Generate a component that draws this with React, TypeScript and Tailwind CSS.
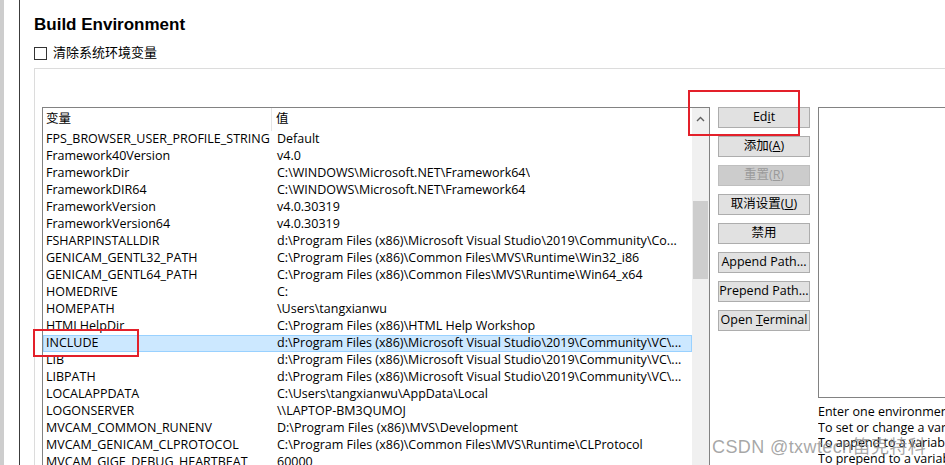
import React from 'react';

const rows: [string, string][] = [
  ['FPS_BROWSER_USER_PROFILE_STRING', 'Default'],
  ['Framework40Version', 'v4.0'],
  ['FrameworkDir', 'C:\\WINDOWS\\Microsoft.NET\\Framework64\\'],
  ['FrameworkDIR64', 'C:\\WINDOWS\\Microsoft.NET\\Framework64'],
  ['FrameworkVersion', 'v4.0.30319'],
  ['FrameworkVersion64', 'v4.0.30319'],
  ['FSHARPINSTALLDIR', 'd:\\Program Files (x86)\\Microsoft Visual Studio\\2019\\Community\\Co...'],
  ['GENICAM_GENTL32_PATH', 'C:\\Program Files (x86)\\Common Files\\MVS\\Runtime\\Win32_i86'],
  ['GENICAM_GENTL64_PATH', 'C:\\Program Files (x86)\\Common Files\\MVS\\Runtime\\Win64_x64'],
  ['HOMEDRIVE', 'C:'],
  ['HOMEPATH', '\\Users\\tangxianwu'],
  ['HTMLHelpDir', 'C:\\Program Files (x86)\\HTML Help Workshop'],
  ['INCLUDE', 'd:\\Program Files (x86)\\Microsoft Visual Studio\\2019\\Community\\VC\\...'],
  ['LIB', 'd:\\Program Files (x86)\\Microsoft Visual Studio\\2019\\Community\\VC\\...'],
  ['LIBPATH', 'd:\\Program Files (x86)\\Microsoft Visual Studio\\2019\\Community\\VC\\...'],
  ['LOCALAPPDATA', 'C:\\Users\\tangxianwu\\AppData\\Local'],
  ['LOGONSERVER', '\\\\LAPTOP-BM3QUMOJ'],
  ['MVCAM_COMMON_RUNENV', 'D:\\Program Files (x86)\\MVS\\Development'],
  ['MVCAM_GENICAM_CLPROTOCOL', 'C:\\Program Files (x86)\\Common Files\\MVS\\Runtime\\CLProtocol'],
  ['MVCAM_GIGE_DEBUG_HEARTBEAT', '60000'],
];

const ui = { fontFamily: '"Open Sans", "Noto Sans CJK SC", sans-serif' };

const Btn = ({ children, disabled }: { children: React.ReactNode; disabled?: boolean }) => (
  <div
    className={`h-[21px] w-[92px] border flex items-center justify-center text-[12.5px] whitespace-nowrap ${
      disabled
        ? 'bg-[#cccccc] border-[#bfbfbf] text-[#9a9a9a]'
        : 'bg-[#e1e1e1] border-[#adadad] text-black'
    }`}
    style={ui}
  >
    <span>{children}</span>
  </div>
);

export default function App() {
  return (
    <div
      className="relative w-[945px] h-[465px] overflow-hidden bg-white flex text-black"
      style={{ fontFamily: '"Liberation Sans", "Noto Sans CJK SC", sans-serif' }}
    >
      {/* left window edge */}
      <div className="w-[19px] h-full flex shrink-0">
        <div className="w-[4px] h-full bg-[#cdcdcd]" />
      </div>
      <div className="w-[1px] h-full bg-[#3c3c3c] shrink-0" />

      <div className="flex-1 pl-[14px] flex flex-col min-w-0">
        <h1 className="mt-[13px] h-[24px] leading-[24px] text-[17px] font-bold">Build Environment</h1>
        <label className="mt-[8px] h-[16px] flex items-center gap-[6px] text-[13px]">
          <span className="w-[13px] h-[13px] border border-[#333333] bg-white" />
          <span>清除系统环境变量</span>
        </label>

        {/* group box */}
        <div className="mt-[7px] flex-1 border-l border-t border-[#dcdcdc] pl-[7px] pt-[38px] flex gap-[8px] min-w-0">
          {/* list view */}
          <div className="w-[668px] shrink-0 h-[400px] border border-[#828282] flex">
            <div className="flex-1 flex flex-col text-[12.5px]" style={ui}>
              <div className="h-[23px] flex items-center shrink-0">
                <div className="w-[229px] pl-[3px] h-full flex items-center border-r border-[#e5e5e5]">变量</div>
                <div className="pl-[4px]">值</div>
              </div>
              {rows.map(([k, v]) => {
                const sel = k === 'INCLUDE';
                return (
                  <div
                    key={k}
                    className={`h-[17px] flex items-center whitespace-nowrap border ${
                      sel ? 'bg-[#cce8ff] border-[#99d1ff]' : 'border-transparent'
                    }`}
                  >
                    <div className="w-[228px] pl-[2px] overflow-hidden">{k}</div>
                    <div className="pl-[5px] overflow-hidden">{v}</div>
                  </div>
                );
              })}
            </div>
            {/* scrollbar */}
            <div className="w-[17px] h-full bg-[#f0f0f0] flex flex-col items-center shrink-0">
              <div className="h-[22px] w-full flex items-center justify-center">
                <svg width="9" height="6" viewBox="0 0 9 6">
                  <path d="M1 5 L4.5 1.5 L8 5" fill="none" stroke="#606060" strokeWidth="1.4" />
                </svg>
              </div>
              <div className="mt-[71px] w-[15px] h-[78px] bg-[#cdcdcd]" />
            </div>
          </div>

          {/* buttons */}
          <div className="w-[92px] shrink-0 flex flex-col gap-[8px]">
            <Btn>
              Ed<span className="underline">i</span>t
            </Btn>
            <Btn>
              添加(<span className="underline">A</span>)
            </Btn>
            <Btn disabled>
              重置(<span className="underline">R</span>)
            </Btn>
            <Btn>
              取消设置(<span className="underline">U</span>)
            </Btn>
            <Btn>禁用</Btn>
            <Btn>Append Path...</Btn>
            <Btn>Prepend Path...</Btn>
            <Btn>
              Open <span className="underline">T</span>erminal
            </Btn>
          </div>

          {/* description panel */}
          <div className="flex-1 flex flex-col min-w-0">
            <div className="h-[291px] border border-[#828282] border-r-0" />
            <div className="mt-[6px] text-[12.5px] leading-[15.5px] whitespace-nowrap overflow-hidden" style={ui}>
              <div>Enter one environment variable per line.</div>
              <div>To set or change a variable, use 'VAR=value'.</div>
              <div>To append to a variable, use 'VAR+=value'.</div>
              <div>To prepend to a variable, use 'VAR^=value'.</div>
            </div>
          </div>
        </div>
      </div>

      {/* annotation boxes */}
      <div className="absolute left-[688px] top-[90px] w-[112px] h-[46px] border-2 border-[#e3202a]" />
      <div className="absolute left-[33px] top-[329px] w-[106px] h-[28px] border-2 border-[#e3202a]" />

      {/* watermark */}
      <div className="absolute left-[712px] top-[436px] text-[18px] leading-[22px] tracking-[0.4px] text-[#8a8a8a]/75 whitespace-nowrap">
        CSDN @txwtech笛克特科
      </div>
    </div>
  );
}
